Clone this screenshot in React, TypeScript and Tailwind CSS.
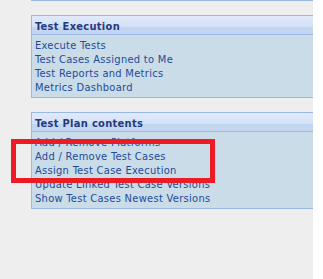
import React from "react";

const font = { fontFamily: '"DejaVu Sans Condensed", "DejaVu Sans", Tahoma, sans-serif' };

interface PanelProps {
    title: string;
    links: string[];
}

const Panel: React.FC<PanelProps> = ({ title, links }) => (
    <div className="ml-[31px] border-y border-l border-[#99b8e6]">
        <div className="h-[19px] flex items-end pb-[2px] pl-[3px] border-b border-[#99b8e6] bg-[linear-gradient(to_bottom,#e0eafa_0%,#d3e0f6_60%,#c3d5f1_62%,#c3d5f1_100%)]">
            <span className="text-[11px] font-bold tracking-[0.3px] text-[#253a7c] leading-none">{title}</span>
        </div>
        <div className="bg-[#c9dce7] pt-[4px] pb-[2px] pl-[3px]">
            {links.map((l) => (
                <a key={l} className="block text-[11px] tracking-[0.3px] leading-[14px] text-[#1f4a9a] cursor-pointer">
                    {l}
                </a>
            ))}
        </div>
    </div>
);

export default function App() {
    return (
        <div className="relative flex w-[323px] h-[279px] overflow-hidden" style={font}>
            <div className="w-[313px] h-full bg-[#eeeeee] flex flex-col">
                <div className="ml-[31px] h-px bg-[#99b8e6]" />
                <div className="mt-[14px]">
                    <Panel
                        title="Test Execution"
                        links={[
                            "Execute Tests",
                            "Test Cases Assigned to Me",
                            "Test Reports and Metrics",
                            "Metrics Dashboard",
                        ]}
                    />
                </div>
                <div className="mt-[14px]">
                    <Panel
                        title="Test Plan contents"
                        links={[
                            "Add / Remove Platforms",
                            "Add / Remove Test Cases",
                            "Assign Test Case Execution",
                            "Update Linked Test Case Versions",
                            "Show Test Cases Newest Versions",
                        ]}
                    />
                </div>
            </div>
            <div className="flex-1 bg-white" />
            <div className="absolute left-[11px] top-[139px] w-[204px] h-[44px] border-[5px] border-[#ed1c24]" />
        </div>
    );
}
